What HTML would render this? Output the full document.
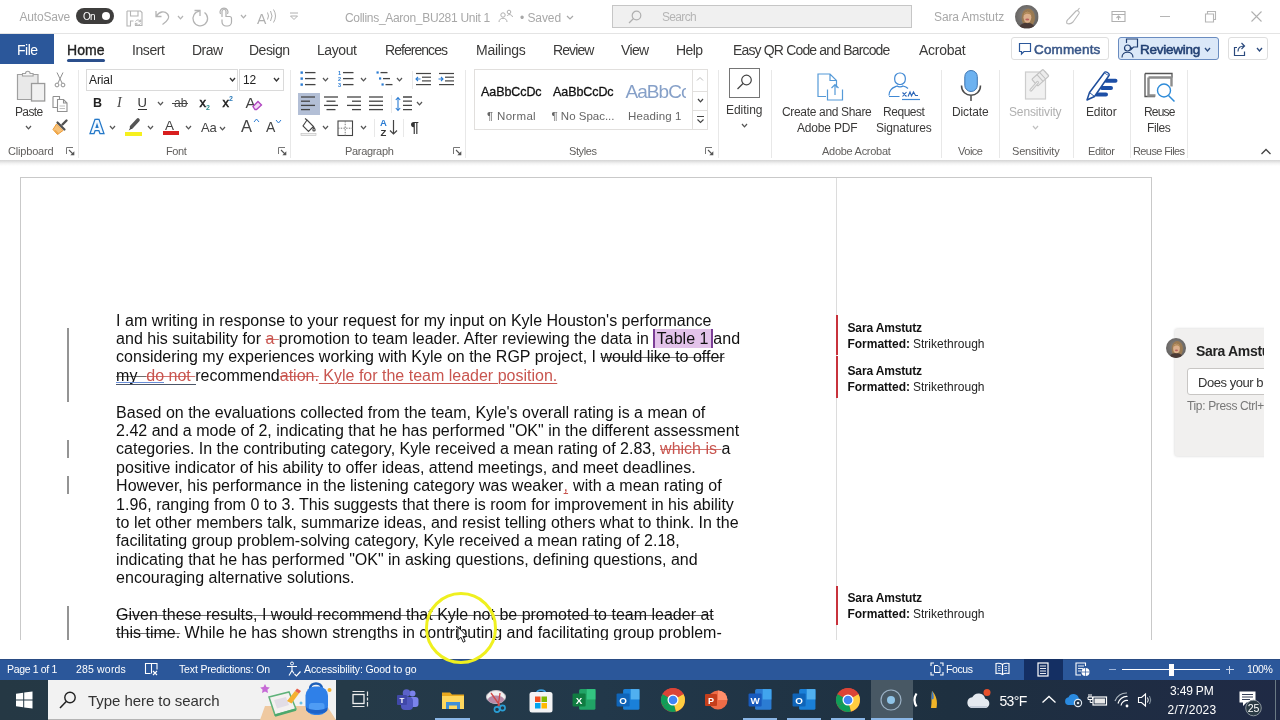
<!DOCTYPE html>
<html><head><meta charset="utf-8"><title>Word</title>
<style>
html,body{margin:0;padding:0}
body{width:1280px;height:720px;overflow:hidden;background:#fff;position:relative;font-family:"Liberation Sans",sans-serif;-webkit-font-smoothing:antialiased}
#root{position:absolute;left:0;top:0;width:1280px;height:720px;will-change:transform;}
.t{position:absolute;white-space:pre;line-height:1}
.r{position:absolute}
svg{overflow:visible}

#doc{position:absolute;left:0;top:0;width:1280px;height:640px;overflow:hidden}
.ln{position:absolute;left:116.100px;font-size:16px;line-height:18px;height:18px;color:#111;white-space:pre}
.sk{text-decoration:line-through;text-decoration-thickness:1px;text-decoration-color:rgba(20,20,20,.62)}
.rs{color:#c8554f;text-decoration:line-through;text-decoration-thickness:1px;text-decoration-color:rgba(200,80,74,.8)}
.ru{color:#c8554f;text-decoration:underline;text-decoration-thickness:1px;text-underline-offset:2px}
.hl{background:#e3c3ea;padding:1px .5px 1px 3.500px;box-shadow:inset 2px 0 0 #7b3f96,inset -2px 0 0 #7b3f96;}
.bu{border-bottom:3px double #4a78c8}
.du{border-bottom:1px solid #555}
</style></head>
<body>
<div id="root">
<div id="doc">
<div class="r" style="left:20px;top:177px;width:1132px;height:1px;background:#c9c9c9;"></div>
<div class="r" style="left:20px;top:177px;width:1px;height:470px;background:#c9c9c9;"></div>
<div class="r" style="left:1151px;top:177px;width:1px;height:470px;background:#c9c9c9;"></div>
<div class="r" style="left:836px;top:178px;width:1px;height:470px;background:#dcdcdc;"></div>
<div class="r" style="left:67.3px;top:328px;width:1.8px;height:74px;background:#949494;"></div>
<div class="r" style="left:67.3px;top:439.5px;width:1.8px;height:18.0px;background:#949494;"></div>
<div class="r" style="left:67.3px;top:476px;width:1.8px;height:18px;background:#949494;"></div>
<div class="r" style="left:67.3px;top:606px;width:1.8px;height:39px;background:#949494;"></div>
<div class="r" style="left:836px;top:315px;width:2px;height:40.30000000000001px;background:#c8323c;"></div>
<div class="r" style="left:836px;top:356.2px;width:2px;height:41.80000000000001px;background:#c8323c;"></div>
<div class="r" style="left:836px;top:585.5px;width:2px;height:39.5px;background:#c8323c;"></div>
<div class="ln" style="top:312.00px">I am writing in response to your request for my input on Kyle Houston's performance</div>
<div class="ln" style="top:330.00px">and his suitability for <span class="rs">a </span>promotion to team leader. After reviewing the data in <span class="hl">Table 1 </span>and</div>
<div class="ln" style="top:348.00px">considering my experiences working with Kyle on the RGP project, I <span class="sk">would like to offer</span></div>
<div class="ln" style="top:367.00px"><span class="sk">my &nbsp;</span><span class="rs">do not </span>recommend<span class="rs">ation.</span><span class="ru"> Kyle for the team leader position.</span></div>
<div class="ln" style="top:404.00px">Based on the evaluations collected from the team, Kyle's overall rating is a mean of</div>
<div class="ln" style="top:422.00px">2.42 and a mode of 2, indicating that he has performed "OK" in the different assessment</div>
<div class="ln" style="top:440.00px">categories. In the contributing category, Kyle received a mean rating of 2.83, <span class="rs">which is </span>a</div>
<div class="ln" style="top:459.00px">positive indicator of his ability to offer ideas, attend meetings, and meet deadlines.</div>
<div class="ln" style="top:477.00px"><span>However, his performance in the listening category was weaker</span><span class="ru" style="margin:0 .6px 0 .2px">,</span> with a mean rating of</div>
<div class="ln" style="top:496.00px">1.96, ranging from 0 to 3. This suggests that there is room for improvement in his ability</div>
<div class="ln" style="top:514.00px">to let other members talk, summarize ideas, and resist telling others what to think. In the</div>
<div class="ln" style="top:532.00px">facilitating group problem-solving category, Kyle received a mean rating of 2.18,</div>
<div class="ln" style="top:551.00px">indicating that he has performed "OK" in asking questions, defining questions, and</div>
<div class="ln" style="top:569.00px">encouraging alternative solutions.</div>
<div class="ln" style="top:606.00px"><span class="sk">Given these results, I would recommend that Kyle not be promoted to team leader at</span></div>
<div class="ln" style="top:624.00px"><span class="sk">this time.</span> While he has shown strengths in contributing and facilitating group problem-</div>
<div class="r" style="left:116px;top:382.4px;width:48px;height:1px;background:#6a8fd8;"></div>
<div class="r" style="left:116px;top:383.8px;width:79.5px;height:1.2px;background:#4b5566;"></div>
<div class="t" style="left:847.5px;top:322px;font-size:12px;color:#111;letter-spacing:-0.15px;font-weight:bold;">Sara Amstutz</div>
<div class="t" style="left:847.5px;top:338px;font-size:12px;color:#111;letter-spacing:-0.02px;font-weight:bold;">Formatted:</div>
<div class="t" style="left:913.0px;top:338px;font-size:12px;color:#222;letter-spacing:0.01px;">Strikethrough</div>
<div class="t" style="left:847.5px;top:365px;font-size:12px;color:#111;letter-spacing:-0.15px;font-weight:bold;">Sara Amstutz</div>
<div class="t" style="left:847.5px;top:381px;font-size:12px;color:#111;letter-spacing:-0.02px;font-weight:bold;">Formatted:</div>
<div class="t" style="left:913.0px;top:381px;font-size:12px;color:#222;letter-spacing:0.01px;">Strikethrough</div>
<div class="t" style="left:847.5px;top:592px;font-size:12px;color:#111;letter-spacing:-0.15px;font-weight:bold;">Sara Amstutz</div>
<div class="t" style="left:847.5px;top:608px;font-size:12px;color:#111;letter-spacing:-0.02px;font-weight:bold;">Formatted:</div>
<div class="t" style="left:913.0px;top:608px;font-size:12px;color:#222;letter-spacing:0.01px;">Strikethrough</div>
<div class="r" style="left:1160px;top:320px;width:103.500px;height:150px;overflow:hidden"><div class="r" style="left:14.5px;top:9px;width:110px;height:126.5px;background:#f1f0ef;box-shadow:0 0 3px rgba(0,0,0,.2);border-radius:2px;"></div>
<div class="r" style="left:27px;top:48px;width:100px;height:27px;background:#fff;border:1px solid #c8c6c4;border-radius:3px;box-sizing:border-box;"></div>
<svg class="r" style="left:6px;top:17.8px" width="20" height="20" viewBox="0 0 24 24"><defs><clipPath id="avc1"><circle cx="12" cy="12" r="12"/></clipPath><radialGradient id="avg1" cx="50%" cy="45%" r="60%"><stop offset="0" stop-color="#8e8b88"/><stop offset="1" stop-color="#5f5d5c"/></radialGradient></defs><g clip-path="url(#avc1)"><rect width="24" height="24" fill="url(#avg1)"/><ellipse cx="13.500" cy="13" rx="6.800" ry="9.500" fill="#9a7a52"/><ellipse cx="12.600" cy="12.500" rx="4" ry="5.600" fill="#dcb08c"/><path d="M8.600 11c.5-5 8-5.500 8.500 0c-2-2.500-6-3-8.500 0z" fill="#b08a58"/><ellipse cx="12.500" cy="14.800" rx="2" ry="1" fill="#b8605c"/><path d="M4 24c1-5 5-6 8.500-5.500c4-.5 7 1.500 8 5.500z" fill="#4a3a36"/></g></svg>
<div class="t" style="left:36.0px;top:24px;font-size:14px;color:#222;letter-spacing:-0.33px;font-weight:bold;">Sara Amstutz</div>
<div class="t" style="left:38.0px;top:56px;font-size:13px;color:#333;letter-spacing:-0.46px;">Does your b</div>
<div class="t" style="left:27.0px;top:80px;font-size:12px;color:#777;letter-spacing:-0.35px;">Tip: Press Ctrl+</div>
</div>
</div>
<div class="r" style="left:0px;top:0px;width:1280px;height:33px;background:#ffffff;"></div>
<div class="t" style="left:19.5px;top:11px;font-size:12px;color:#a8a8a8;letter-spacing:-0.19px;">AutoSave</div>
<div class="r" style="left:76px;top:8.2px;width:38px;height:15.6px;background:#3e3d3c;border-radius:8px;"></div>
<div class="t" style="left:83.0px;top:12px;font-size:10px;color:#fff;letter-spacing:-0.67px;">On</div>
<div class="r" style="left:101.6px;top:11.6px;width:8.8px;height:8.8px;background:#fff;border-radius:50%;"></div>
<svg class="r" style="left:125.5px;top:9.5px" width="17" height="17" viewBox="0 0 17 17"><path d="M1 1h13.500l1.500 1.500v13h-7 M1 1v15h4" fill="none" stroke="#b4b4b4" stroke-width="1.100"/><path d="M4.500 1v5h7.500v-5 M4.500 16v-5h3" fill="none" stroke="#b4b4b4" stroke-width="1.100"/><path d="M9.500 11.500c1-2 4-2 5 0 M14.500 13.500c-1 2-4 2-5 0 M14.700 9.500v2.200h-2.200 M9.300 15.500v-2.200h2.200" fill="none" stroke="#b4b4b4" stroke-width="1"/></svg>
<svg class="r" style="left:153px;top:7px" width="20" height="20" viewBox="0 0 20 20"><path d="M3 4v5.500h5.500 M3.500 9c2.500-4.500 8-5.500 11-2c2.500 3 .5 7-5 10.500" fill="none" stroke="#b4b4b4" stroke-width="1.300"/></svg>
<svg class="r" style="left:176.5px;top:14.5px" width="7" height="6" viewBox="0 0 7 6"><path d="M1 1 L3.5 3.9 L6 1" fill="none" stroke="#b4b4b4" stroke-width="1.25"/></svg>
<svg class="r" style="left:191px;top:7px" width="20" height="20" viewBox="0 0 20 20"><path d="M3.500 3.500h5.500v5.500" fill="none" stroke="#b4b4b4" stroke-width="1.300"/><path d="M8.500 4.200a7.300 7.300 0 1 0 5 1.300" fill="none" stroke="#b4b4b4" stroke-width="1.300"/></svg>
<svg class="r" style="left:217px;top:7px" width="18" height="20" viewBox="0 0 18 20"><path d="M5 10V4.500a2 2 0 0 1 4 0V10 M9 9.500h3.500a2 2 0 0 1 2 2V15a4 4 0 0 1-4 4H9a4 4 0 0 1-4-4v-2.500 M3.500 7a4 4 0 1 1 7 0" fill="none" stroke="#b0b0b0" stroke-width="1.2"/></svg>
<svg class="r" style="left:239.5px;top:14px" width="7" height="6" viewBox="0 0 7 6"><path d="M1 1 L3.5 3.9 L6 1" fill="none" stroke="#b0b0b0" stroke-width="1.25"/></svg>
<div class="t" style="left:257.0px;top:12px;font-size:14px;color:#b0b0b0;letter-spacing:-0.34px;">A</div>
<svg class="r" style="left:266px;top:9px" width="12" height="14" viewBox="0 0 12 14"><path d="M1.500 3.500q2 3.500 0 7 M4.500 2q3 5 0 10 M7.500 .5q4 6.500 0 13" fill="none" stroke="#b0b0b0" stroke-width="1"/></svg>
<svg class="r" style="left:289px;top:12px" width="10" height="9" viewBox="0 0 10 9"><path d="M1 1h8 M1.500 4l3.500 3.500l3.500-3.500z" fill="none" stroke="#b0b0b0" stroke-width="1"/></svg>
<div class="t" style="left:345.0px;top:12px;font-size:12px;color:#a8a8a8;letter-spacing:-0.30px;">Collins_Aaron_BU281 Unit 1</div>
<svg class="r" style="left:498px;top:9px" width="16" height="14" viewBox="0 0 16 14"><circle cx="5" cy="6" r="2.200" fill="none" stroke="#b0b0b0" stroke-width="1"/><path d="M1 13c0-5 8-5 8 0" fill="none" stroke="#b0b0b0" stroke-width="1"/><circle cx="11" cy="3" r="1.800" fill="none" stroke="#b0b0b0" stroke-width="1"/><path d="M9 7c1-2 5-2 5.500 1" fill="none" stroke="#b0b0b0" stroke-width="1"/></svg>
<div class="t" style="left:520.0px;top:12px;font-size:12px;color:#a8a8a8;letter-spacing:-0.08px;">• Saved</div>
<svg class="r" style="left:566.0px;top:14.5px" width="8" height="6" viewBox="0 0 8 6"><path d="M1 1 L4.0 3.9 L7 1" fill="none" stroke="#a8a8a8" stroke-width="1.25"/></svg>
<div class="r" style="left:612px;top:5px;width:300px;height:23px;background:#f0f0f0;border:1px solid #c6c6c6;box-sizing:border-box;"></div>
<svg class="r" style="left:627px;top:9px" width="16" height="16" viewBox="0 0 16 16"><circle cx="9.500" cy="6.500" r="4.300" fill="none" stroke="#b0b0b0" stroke-width="1.200"/><path d="M6.500 9.500L2 14" stroke="#b0b0b0" stroke-width="1.300"/></svg>
<div class="t" style="left:662.0px;top:11px;font-size:12px;color:#b5b5b5;letter-spacing:-0.67px;">Search</div>
<div class="t" style="left:934.0px;top:11px;font-size:12px;color:#a8a8a8;letter-spacing:-0.11px;">Sara Amstutz</div>
<svg class="r" style="left:1015.2px;top:4.5px" width="23.6" height="23.6" viewBox="0 0 24 24"><defs><clipPath id="avc2"><circle cx="12" cy="12" r="12"/></clipPath><radialGradient id="avg2" cx="50%" cy="45%" r="60%"><stop offset="0" stop-color="#8e8b88"/><stop offset="1" stop-color="#5f5d5c"/></radialGradient></defs><g clip-path="url(#avc2)"><rect width="24" height="24" fill="url(#avg2)"/><ellipse cx="13.500" cy="13" rx="6.800" ry="9.500" fill="#9a7a52"/><ellipse cx="12.600" cy="12.500" rx="4" ry="5.600" fill="#dcb08c"/><path d="M8.600 11c.5-5 8-5.500 8.500 0c-2-2.500-6-3-8.500 0z" fill="#b08a58"/><ellipse cx="12.500" cy="14.800" rx="2" ry="1" fill="#b8605c"/><path d="M4 24c1-5 5-6 8.500-5.500c4-.5 7 1.500 8 5.500z" fill="#4a3a36"/></g></svg>
<svg class="r" style="left:1064px;top:7px" width="20" height="20" viewBox="0 0 20 20"><path d="M3 16.500c-1-2 0-3.500 2-5l7-7.500c1.500-1 4 .5 3 2.500l-6 8.500c-1.500 1.500-3.500 2.500-6 1.500z M13.500 3.500l2-2.500" fill="none" stroke="#b8b8b8" stroke-width="1.100"/></svg>
<svg class="r" style="left:1111px;top:10px" width="15" height="13" viewBox="0 0 15 13"><path d="M1 1.500h13v10h-13z M1 4.500h13 M7.500 10V6.500 M5.500 8l2-2l2 2" fill="none" stroke="#b0b0b0" stroke-width="1.100"/></svg>
<div class="r" style="left:1160px;top:15.5px;width:10px;height:1.2px;background:#b5b5b5;"></div>
<svg class="r" style="left:1204px;top:10px" width="13" height="13" viewBox="0 0 13 13"><path d="M1.500 4h8v8h-8z M3.500 4V1.500h8v8H9.500" fill="none" stroke="#b5b5b5" stroke-width="1.100"/></svg>
<svg class="r" style="left:1250px;top:10px" width="13" height="13" viewBox="0 0 13 13"><path d="M1.500 1.500l10 10 M11.500 1.500l-10 10" stroke="#b0b0b0" stroke-width="1.100"/></svg>
<div class="r" style="left:0px;top:33px;width:1280px;height:33px;background:#ffffff;"></div>
<div class="r" style="left:0px;top:33px;width:1280px;height:1px;background:#e4e4e4;"></div>
<div class="r" style="left:0px;top:34px;width:54px;height:30px;background:#2b579a;"></div>
<div class="t" style="left:17.0px;top:43px;font-size:14px;color:#fff;letter-spacing:-0.51px;">File</div>
<div class="t" style="left:67.0px;top:43px;font-size:14px;color:#222;letter-spacing:0.04px;-webkit-text-stroke:.35px #222;">Home</div>
<div class="r" style="left:67.2px;top:58.8px;width:38.2px;height:2.8px;background:#2b4f8c;border-radius:1.500px;"></div>
<div class="t" style="left:132.0px;top:43px;font-size:14px;color:#3b3a39;letter-spacing:-0.42px;">Insert</div>
<div class="t" style="left:192.0px;top:43px;font-size:14px;color:#3b3a39;letter-spacing:-0.54px;">Draw</div>
<div class="t" style="left:249.0px;top:43px;font-size:14px;color:#3b3a39;letter-spacing:-0.51px;">Design</div>
<div class="t" style="left:317.0px;top:43px;font-size:14px;color:#3b3a39;letter-spacing:-0.42px;">Layout</div>
<div class="t" style="left:385.0px;top:43px;font-size:14px;color:#3b3a39;letter-spacing:-0.96px;">References</div>
<div class="t" style="left:476.0px;top:43px;font-size:14px;color:#3b3a39;letter-spacing:-0.23px;">Mailings</div>
<div class="t" style="left:553.0px;top:43px;font-size:14px;color:#3b3a39;letter-spacing:-0.90px;">Review</div>
<div class="t" style="left:621.0px;top:43px;font-size:14px;color:#3b3a39;letter-spacing:-0.65px;">View</div>
<div class="t" style="left:676.0px;top:43px;font-size:14px;color:#3b3a39;letter-spacing:-0.57px;">Help</div>
<div class="t" style="left:733.0px;top:43px;font-size:14px;color:#3b3a39;letter-spacing:-0.84px;">Easy QR Code and Barcode</div>
<div class="t" style="left:919.0px;top:43px;font-size:14px;color:#3b3a39;letter-spacing:-0.25px;">Acrobat</div>
<div class="r" style="left:1011px;top:36.5px;width:98px;height:23.5px;background:#fff;border:1px solid #dedede;border-radius:3px;box-sizing:border-box;"></div>
<svg class="r" style="left:1018px;top:42px" width="14" height="14" viewBox="0 0 14 14"><path d="M1.500 1.500h11v8h-6.500l-2.500 2.500v-2.500h-2z" fill="none" stroke="#2b579a" stroke-width="1.200"/></svg>
<div class="t" style="left:1034.0px;top:43px;font-size:13.5px;color:#3a5788;letter-spacing:0.15px;-webkit-text-stroke:.55px #3a5788;">Comments</div>
<div class="r" style="left:1118px;top:36.5px;width:100.5px;height:23.5px;background:#dbe8f8;border:1px solid #6a8cc0;border-radius:3px;box-sizing:border-box;"></div>
<svg class="r" style="left:1121px;top:38px" width="18" height="20" viewBox="0 0 18 20"><path d="M5.500 5V1h11v8h-4l-2.500 2.500V9" fill="none" stroke="#213f72" stroke-width="1.200"/><circle cx="6.500" cy="10" r="3" fill="#dbe8f8" stroke="#213f72" stroke-width="1.200"/><path d="M1 19.500c0-7 11-7 11 0" fill="none" stroke="#213f72" stroke-width="1.200"/></svg>
<div class="t" style="left:1140.0px;top:43px;font-size:13.5px;color:#213f72;letter-spacing:-0.25px;-webkit-text-stroke:.55px #213f72;">Reviewing</div>
<svg class="r" style="left:1204.0px;top:46.5px" width="7" height="6" viewBox="0 0 7 6"><path d="M1 1 L3.5 3.9 L6 1" fill="none" stroke="#2b4a7d" stroke-width="1.3499999999999999"/></svg>
<div class="r" style="left:1227.5px;top:36.5px;width:40px;height:23.5px;background:#fff;border:1px solid #dedede;border-radius:3px;box-sizing:border-box;"></div>
<svg class="r" style="left:1233px;top:41px" width="15" height="16" viewBox="0 0 15 16"><path d="M4 6.500h-2.500v8h10v-4 M5 10.500c0-4 3-5.500 6-5.500 M8.500 2l3 3l-3 3" fill="none" stroke="#2b4a7d" stroke-width="1.200"/></svg>
<svg class="r" style="left:1256.0px;top:47px" width="7" height="6" viewBox="0 0 7 6"><path d="M1 1 L3.5 3.9 L6 1" fill="none" stroke="#2b4a7d" stroke-width="1.3499999999999999"/></svg>
<div class="r" style="left:0px;top:66px;width:1280px;height:94px;background:#ffffff;"></div>
<div class="r" style="left:0px;top:159.5px;width:1280px;height:6px;background:linear-gradient(#d4d4d4,#f4f4f4 60%,#ffffff);"></div>
<svg class="r" style="left:16px;top:70px" width="32" height="34" viewBox="0 0 32 34"><path d="M1.500 4.500h20.500v25h-20.500z" fill="#e9e9e9" stroke="#a0a0a0" stroke-width="1.200"/><path d="M6.500 6V3.500h3a2.300 2.300 0 0 1 4.600 0h3v2.500z" fill="#f6f6f6" stroke="#a0a0a0" stroke-width="1.100"/><rect x="15.500" y="13.500" width="13.200" height="17.500" fill="#f1f1f1" stroke="#9a9a9a" stroke-width="1.300"/></svg>
<div class="t" style="left:15.0px;top:106px;font-size:12px;color:#3b3a39;letter-spacing:-0.64px;">Paste</div>
<svg class="r" style="left:25.0px;top:125px" width="7" height="6" viewBox="0 0 7 6"><path d="M1 1 L3.5 3.9 L6 1" fill="none" stroke="#555" stroke-width="1.25"/></svg>
<svg class="r" style="left:54px;top:71.5px" width="12" height="16" viewBox="0 0 12 16"><path d="M3 .5l5 10.500 M9 .5l-5 10.500" stroke="#909090" stroke-width="1" fill="none"/><circle cx="3" cy="13" r="1.900" fill="none" stroke="#909090" stroke-width="1"/><circle cx="9" cy="13" r="1.900" fill="none" stroke="#909090" stroke-width="1"/></svg>
<svg class="r" style="left:52px;top:94.5px" width="17" height="17" viewBox="0 0 17 17"><path d="M1 1.500h6.500v3 M1 1.500v11h4" fill="none" stroke="#909090" stroke-width="1.100"/><path d="M5.500 4.500h6l3.500 3.500v8.500h-9.500z M11.500 4.500v3.500h3.500" fill="none" stroke="#909090" stroke-width="1.100"/><path d="M7.500 11h5.500 M7.500 13.500h5.500" stroke="#b0b0b0" stroke-width=".800"/></svg>
<svg class="r" style="left:52px;top:118px" width="17" height="17" viewBox="0 0 17 17"><path d="M4.500 6l6.500 6.500l-5.500 4l-4.500-5z" fill="#f7c27a" stroke="#ec9a34" stroke-width="1"/><path d="M3 12.500l3.500 3.500" stroke="#f0a848" stroke-width="1.600"/><path d="M5.500 4.500l7 7" stroke="#505050" stroke-width="2.200" stroke-linecap="round"/><path d="M10.500 6.500l4-4" stroke="#505050" stroke-width="2.400" stroke-linecap="round"/></svg>
<div class="t" style="left:8.0px;top:146px;font-size:11px;color:#605e5c;letter-spacing:-0.18px;">Clipboard</div>
<svg class="r" style="left:65.5px;top:147.0px" width="9" height="9" viewBox="0 0 9 9"><path d="M.5 7V.5H7" fill="none" stroke="#777" stroke-width="1"/><path d="M3 3l4.500 4.500" stroke="#555" stroke-width="1.100"/><path d="M8.300 4.300V8.300H4.300z" fill="#555"/></svg>
<div class="r" style="left:78px;top:70px;width:1px;height:88px;background:#e8e8e8;"></div>
<div class="r" style="left:86px;top:69px;width:152px;height:22px;background:#fff;border:1px solid #dadada;box-sizing:border-box;"></div>
<div class="r" style="left:239px;top:69px;width:45px;height:22px;background:#fff;border:1px solid #dadada;box-sizing:border-box;"></div>
<div class="t" style="left:89.0px;top:74px;font-size:12px;color:#222;letter-spacing:-0.10px;">Arial</div>
<svg class="r" style="left:228.5px;top:77px" width="7" height="6" viewBox="0 0 7 6"><path d="M1 1 L3.5 3.9 L6 1" fill="none" stroke="#333" stroke-width="1.3499999999999999"/></svg>
<div class="t" style="left:243.0px;top:74px;font-size:12px;color:#222;letter-spacing:-0.17px;">12</div>
<svg class="r" style="left:272.5px;top:77px" width="7" height="6" viewBox="0 0 7 6"><path d="M1 1 L3.5 3.9 L6 1" fill="none" stroke="#333" stroke-width="1.3499999999999999"/></svg>
<div class="t" style="left:93.0px;top:97px;font-size:12.5px;color:#222;font-weight:bold;">B</div>
<div class="t" style="left:117.0px;top:96px;font-size:14px;color:#444;font-style:italic;font-family:'Liberation Serif',serif;">I</div>
<div class="t" style="left:137.5px;top:96px;font-size:13px;color:#333;">U</div>
<div class="r" style="left:137.5px;top:109px;width:9.5px;height:1.1px;background:#333;"></div>
<svg class="r" style="left:156.5px;top:100.5px" width="7" height="6" viewBox="0 0 7 6"><path d="M1 1 L3.5 3.9 L6 1" fill="none" stroke="#555" stroke-width="1.25"/></svg>
<div class="t" style="left:174.0px;top:97px;font-size:12px;color:#444;">ab</div>
<div class="r" style="left:172px;top:102.5px;width:16px;height:1.1px;background:#444;"></div>
<div class="t" style="left:199.5px;top:96px;font-size:13px;color:#222;-webkit-text-stroke:.5px #222;">x</div>
<div class="t" style="left:206.0px;top:104px;font-size:7px;color:#2a8a8a;font-weight:bold;">2</div>
<div class="t" style="left:222.5px;top:96px;font-size:13px;color:#222;-webkit-text-stroke:.5px #222;">x</div>
<div class="t" style="left:229.0px;top:95px;font-size:7px;color:#2a7ab8;font-weight:bold;">2</div>
<div class="t" style="left:245.5px;top:95px;font-size:15px;color:#444;">A</div>
<svg class="r" style="left:251.5px;top:100px" width="11" height="10" viewBox="0 0 11 10"><path d="M1 6.500l5-5l3.500 3.500l-5 4.500h-1.500z" fill="#f3d8f5" stroke="#b044c0" stroke-width="1.300"/></svg>
<div class="t" style="left:90.5px;top:118px;font-size:18px;color:#f4f9fe;font-weight:bold;-webkit-text-stroke:2.600px #2478c8;paint-order:stroke fill;">A</div>
<svg class="r" style="left:108.5px;top:125px" width="7" height="6" viewBox="0 0 7 6"><path d="M1 1 L3.5 3.9 L6 1" fill="none" stroke="#555" stroke-width="1.25"/></svg>
<svg class="r" style="left:126px;top:117px" width="16" height="16" viewBox="0 0 16 16"><path d="M12 3l-6.500 7" stroke="#555" stroke-width="3.600" stroke-linecap="round"/><path d="M4.500 10l1.800 1.600l-3.600 1.800z" fill="#444"/></svg>
<div class="r" style="left:125px;top:131.5px;width:17px;height:4px;background:#f6f01e;"></div>
<svg class="r" style="left:146.5px;top:125px" width="7" height="6" viewBox="0 0 7 6"><path d="M1 1 L3.5 3.9 L6 1" fill="none" stroke="#555" stroke-width="1.25"/></svg>
<div class="t" style="left:165.0px;top:119px;font-size:13.5px;color:#444;">A</div>
<div class="r" style="left:162.5px;top:130.5px;width:16.5px;height:4px;background:#d81e1e;"></div>
<svg class="r" style="left:184.5px;top:125px" width="7" height="6" viewBox="0 0 7 6"><path d="M1 1 L3.5 3.9 L6 1" fill="none" stroke="#555" stroke-width="1.25"/></svg>
<div class="t" style="left:201.0px;top:121px;font-size:13px;color:#444;letter-spacing:-0.20px;">Aa</div>
<svg class="r" style="left:219.0px;top:125.5px" width="7" height="6" viewBox="0 0 7 6"><path d="M1 1 L3.5 3.9 L6 1" fill="none" stroke="#555" stroke-width="1.25"/></svg>
<div class="t" style="left:241.0px;top:118px;font-size:16.5px;color:#444;">A</div>
<svg class="r" style="left:252.5px;top:118px" width="7" height="5" viewBox="0 0 7 5"><path d="M1 4l2.500-3l2.500 3" fill="none" stroke="#2b7cd3" stroke-width="1"/></svg>
<div class="t" style="left:266.0px;top:120px;font-size:14px;color:#444;">A</div>
<svg class="r" style="left:274.5px;top:118.5px" width="7" height="5" viewBox="0 0 7 5"><path d="M1 1l2.500 3l2.500-3" fill="none" stroke="#2b7cd3" stroke-width="1"/></svg>
<div class="t" style="left:166.0px;top:146px;font-size:11px;color:#605e5c;letter-spacing:-0.38px;">Font</div>
<svg class="r" style="left:277.5px;top:147.0px" width="9" height="9" viewBox="0 0 9 9"><path d="M.5 7V.5H7" fill="none" stroke="#777" stroke-width="1"/><path d="M3 3l4.500 4.500" stroke="#555" stroke-width="1.100"/><path d="M8.300 4.300V8.300H4.300z" fill="#555"/></svg>
<div class="r" style="left:290px;top:70px;width:1px;height:88px;background:#e8e8e8;"></div>
<svg class="r" style="left:300px;top:71.3px" width="16" height="16" viewBox="0 0 16 16"><rect x="0.500" y="0.4" width="2.400" height="2.400" fill="#2b7cd3"/><path d="M5 1.6H15.500" stroke="#444" stroke-width="1.300"/><rect x="0.500" y="6.4" width="2.400" height="2.400" fill="#2b7cd3"/><path d="M5 7.6H15.500" stroke="#444" stroke-width="1.300"/><rect x="0.500" y="12.4" width="2.400" height="2.400" fill="#2b7cd3"/><path d="M5 13.6H15.500" stroke="#444" stroke-width="1.300"/></svg>
<svg class="r" style="left:322.0px;top:77px" width="7" height="6" viewBox="0 0 7 6"><path d="M1 1 L3.5 3.9 L6 1" fill="none" stroke="#555" stroke-width="1.25"/></svg>
<svg class="r" style="left:338px;top:71.3px" width="16" height="16" viewBox="0 0 16 16"><text x="1.600" y="3.6" font-family="Liberation Sans,sans-serif" font-size="5.500" font-weight="bold" fill="#2b7cd3" text-anchor="middle">1</text><path d="M5 1.6H15.500" stroke="#444" stroke-width="1.300"/><text x="1.600" y="9.6" font-family="Liberation Sans,sans-serif" font-size="5.500" font-weight="bold" fill="#2b7cd3" text-anchor="middle">2</text><path d="M5 7.6H15.500" stroke="#444" stroke-width="1.300"/><text x="1.600" y="15.6" font-family="Liberation Sans,sans-serif" font-size="5.500" font-weight="bold" fill="#2b7cd3" text-anchor="middle">3</text><path d="M5 13.6H15.500" stroke="#444" stroke-width="1.300"/></svg>
<svg class="r" style="left:359.5px;top:77px" width="7" height="6" viewBox="0 0 7 6"><path d="M1 1 L3.5 3.9 L6 1" fill="none" stroke="#555" stroke-width="1.25"/></svg>
<svg class="r" style="left:376px;top:71.3px" width="16" height="16" viewBox="0 0 16 16"><rect x="0.5" y="0.4" width="2.200" height="2.200" fill="#2b7cd3"/><path d="M4.5 1.6H11.5" stroke="#444" stroke-width="1.300"/><rect x="3" y="6.4" width="2.200" height="2.200" fill="#2b7cd3"/><path d="M7 7.6H14" stroke="#444" stroke-width="1.300"/><rect x="5.5" y="12.4" width="2.200" height="2.200" fill="#2b7cd3"/><path d="M9.5 13.6H16.5" stroke="#444" stroke-width="1.300"/></svg>
<svg class="r" style="left:395.5px;top:77px" width="7" height="6" viewBox="0 0 7 6"><path d="M1 1 L3.5 3.9 L6 1" fill="none" stroke="#555" stroke-width="1.25"/></svg>
<div class="r" style="left:412px;top:71px;width:1px;height:18px;background:#e8e8e8;"></div>
<svg class="r" style="left:415px;top:72px" width="17" height="15" viewBox="0 0 17 15"><path d="M1 1.5H16" stroke="#444" stroke-width="1.200"/><path d="M7 5.2H16" stroke="#444" stroke-width="1.200"/><path d="M7 8.9H16" stroke="#444" stroke-width="1.200"/><path d="M1 12.600000000000001H16" stroke="#444" stroke-width="1.200"/><path d="M5.500 7H1 M3 5l-2 2l2 2" fill="none" stroke="#2b7cd3" stroke-width="1.100"/></svg>
<svg class="r" style="left:438px;top:72px" width="17" height="15" viewBox="0 0 17 15"><path d="M1 1.5H16" stroke="#444" stroke-width="1.200"/><path d="M7 5.2H16" stroke="#444" stroke-width="1.200"/><path d="M7 8.9H16" stroke="#444" stroke-width="1.200"/><path d="M1 12.600000000000001H16" stroke="#444" stroke-width="1.200"/><path d="M.5 7H5 M3 5l2 2l-2 2" fill="none" stroke="#2b7cd3" stroke-width="1.100"/></svg>
<div class="r" style="left:298px;top:93px;width:22px;height:21.5px;background:#b3bfd6;"></div>
<svg class="r" style="left:301px;top:95.5px" width="16" height="15" viewBox="0 0 16 15"><path d="M0 1.0H14" stroke="#444" stroke-width="1.300"/><path d="M0 5.2H9" stroke="#444" stroke-width="1.300"/><path d="M0 9.4H14" stroke="#444" stroke-width="1.300"/><path d="M0 13.600000000000001H9" stroke="#444" stroke-width="1.300"/></svg>
<svg class="r" style="left:324px;top:95.5px" width="16" height="15" viewBox="0 0 16 15"><path d="M0 1.0H14" stroke="#444" stroke-width="1.300"/><path d="M2.5 5.2H11.5" stroke="#444" stroke-width="1.300"/><path d="M0 9.4H14" stroke="#444" stroke-width="1.300"/><path d="M2.5 13.600000000000001H11.5" stroke="#444" stroke-width="1.300"/></svg>
<svg class="r" style="left:346.5px;top:95.5px" width="16" height="15" viewBox="0 0 16 15"><path d="M0 1.0H14" stroke="#444" stroke-width="1.300"/><path d="M5 5.2H14" stroke="#444" stroke-width="1.300"/><path d="M0 9.4H14" stroke="#444" stroke-width="1.300"/><path d="M5 13.600000000000001H14" stroke="#444" stroke-width="1.300"/></svg>
<svg class="r" style="left:369px;top:95.5px" width="16" height="15" viewBox="0 0 16 15"><path d="M0 1.0H14" stroke="#444" stroke-width="1.300"/><path d="M0 5.2H14" stroke="#444" stroke-width="1.300"/><path d="M0 9.4H14" stroke="#444" stroke-width="1.300"/><path d="M0 13.600000000000001H14" stroke="#444" stroke-width="1.300"/></svg>
<div class="r" style="left:391px;top:95px;width:1px;height:18px;background:#e8e8e8;"></div>
<svg class="r" style="left:395px;top:95.5px" width="18" height="17" viewBox="0 0 18 17"><path d="M3 1.500v13 M.8 4l2.200-2.500l2.200 2.500 M.8 12l2.200 2.500l2.200-2.500" fill="none" stroke="#2b7cd3" stroke-width="1.100"/><path d="M8 1h9 M8 5.200h9 M8 9.400h9 M8 13.600h9" stroke="#444" stroke-width="1.300"/></svg>
<svg class="r" style="left:416.0px;top:101px" width="7" height="6" viewBox="0 0 7 6"><path d="M1 1 L3.5 3.9 L6 1" fill="none" stroke="#555" stroke-width="1.25"/></svg>
<svg class="r" style="left:300px;top:118px" width="18" height="18" viewBox="0 0 18 18"><path d="M7 2l6.500 6.500l-5 5l-5.500-5.500z M7 2l-2-1.500 M14 9.500c1.500 2 1.500 3.500 0 3.500s-1.500-1.500 0-3.500z" fill="none" stroke="#444" stroke-width="1.100"/><rect x="1" y="15.500" width="15" height="2" fill="#f0f0f0" stroke="#bbb" stroke-width=".600"/></svg>
<svg class="r" style="left:322.0px;top:125px" width="7" height="6" viewBox="0 0 7 6"><path d="M1 1 L3.5 3.9 L6 1" fill="none" stroke="#555" stroke-width="1.25"/></svg>
<svg class="r" style="left:337px;top:119.5px" width="17" height="17" viewBox="0 0 17 17"><rect x="1" y="1" width="14.500" height="14.500" fill="none" stroke="#444" stroke-width="1.100"/><path d="M8.200 1v14.500 M1 8.200h14.500" stroke="#777" stroke-width="1" stroke-dasharray="1.500 1.200"/></svg>
<svg class="r" style="left:359.5px;top:125px" width="7" height="6" viewBox="0 0 7 6"><path d="M1 1 L3.5 3.9 L6 1" fill="none" stroke="#555" stroke-width="1.25"/></svg>
<div class="r" style="left:374px;top:119px;width:1px;height:18px;background:#e8e8e8;"></div>
<div class="t" style="left:380.0px;top:118px;font-size:9.5px;color:#2b7cd3;font-weight:bold;">A</div>
<div class="t" style="left:380.5px;top:128px;font-size:9.5px;color:#333;font-weight:bold;">Z</div>
<svg class="r" style="left:389px;top:119px" width="9" height="17" viewBox="0 0 9 17"><path d="M4.500 1v14 M1 11.500l3.500 3.500l3.500-3.500" fill="none" stroke="#444" stroke-width="1.200"/></svg>
<div class="r" style="left:403px;top:119px;width:1px;height:18px;background:#e8e8e8;"></div>
<div class="t" style="left:410.5px;top:119px;font-size:15px;color:#333;font-weight:bold;">¶</div>
<div class="t" style="left:345.0px;top:146px;font-size:11px;color:#605e5c;letter-spacing:-0.32px;">Paragraph</div>
<svg class="r" style="left:452.5px;top:147.0px" width="9" height="9" viewBox="0 0 9 9"><path d="M.5 7V.5H7" fill="none" stroke="#777" stroke-width="1"/><path d="M3 3l4.500 4.500" stroke="#555" stroke-width="1.100"/><path d="M8.300 4.300V8.300H4.300z" fill="#555"/></svg>
<div class="r" style="left:465px;top:70px;width:1px;height:88px;background:#e8e8e8;"></div>
<div class="r" style="left:474px;top:69px;width:234px;height:60.5px;background:#fff;border:1px solid #e1dfdd;box-sizing:border-box;"></div>
<div class="r" style="left:691.5px;top:69px;width:1px;height:60px;background:#e1dfdd;"></div>
<div class="r" style="left:691.5px;top:91px;width:16px;height:1px;background:#e1dfdd;"></div>
<div class="r" style="left:691.5px;top:110px;width:16px;height:1px;background:#e1dfdd;"></div>
<div class="t" style="left:481.0px;top:86px;font-size:12.5px;color:#111;letter-spacing:-0.08px;-webkit-text-stroke:.3px #111;">AaBbCcDc</div>
<div class="t" style="left:487.0px;top:111px;font-size:11.5px;color:#666;letter-spacing:0.32px;">¶ Normal</div>
<div class="t" style="left:553.0px;top:86px;font-size:12.5px;color:#111;letter-spacing:-0.08px;-webkit-text-stroke:.3px #111;">AaBbCcDc</div>
<div class="t" style="left:551.5px;top:111px;font-size:11.5px;color:#666;letter-spacing:-0.01px;">¶ No Spac...</div>
<div class="r" style="left:624px;top:76px;width:61.500px;height:30px;overflow:hidden"><div class="t" style="left:1.5px;top:6px;font-size:19px;color:#86a0c8;letter-spacing:-0.95px;">AaBbCc</div>
</div>
<div class="t" style="left:628.0px;top:111px;font-size:11.5px;color:#666;letter-spacing:0.12px;">Heading 1</div>
<svg class="r" style="left:696px;top:76px" width="8" height="6" viewBox="0 0 8 6"><path d="M1 4.500l3-3l3 3" fill="none" stroke="#bbb" stroke-width="1"/></svg>
<svg class="r" style="left:696.5px;top:97.5px" width="7" height="6" viewBox="0 0 7 6"><path d="M1 1 L3.5 3.9 L6 1" fill="none" stroke="#444" stroke-width="1.25"/></svg>
<svg class="r" style="left:695.5px;top:115px" width="9" height="9" viewBox="0 0 9 9"><path d="M1 1.500h7" stroke="#444" stroke-width="1"/><path d="M1.500 4.500l3 3l3-3" fill="none" stroke="#444" stroke-width="1.100"/></svg>
<div class="t" style="left:569.0px;top:146px;font-size:11px;color:#605e5c;letter-spacing:-0.41px;">Styles</div>
<svg class="r" style="left:705.0px;top:147.0px" width="9" height="9" viewBox="0 0 9 9"><path d="M.5 7V.5H7" fill="none" stroke="#777" stroke-width="1"/><path d="M3 3l4.500 4.500" stroke="#555" stroke-width="1.100"/><path d="M8.300 4.300V8.300H4.300z" fill="#555"/></svg>
<div class="r" style="left:718px;top:70px;width:1px;height:88px;background:#e8e8e8;"></div>
<div class="r" style="left:729px;top:68px;width:31px;height:29.5px;background:#fff;border:1.500px solid #757575;box-sizing:border-box;"></div>
<svg class="r" style="left:735px;top:73px" width="19" height="19" viewBox="0 0 19 19"><circle cx="11.500" cy="7" r="4.800" fill="none" stroke="#444" stroke-width="1.200"/><path d="M8 10.500L2.500 16" stroke="#444" stroke-width="1.300"/></svg>
<div class="t" style="left:726.0px;top:104px;font-size:12px;color:#3b3a39;letter-spacing:-0.03px;">Editing</div>
<svg class="r" style="left:741.0px;top:122.5px" width="7" height="6" viewBox="0 0 7 6"><path d="M1 1 L3.5 3.9 L6 1" fill="none" stroke="#555" stroke-width="1.25"/></svg>
<div class="r" style="left:771px;top:70px;width:1px;height:88px;background:#e8e8e8;"></div>
<svg class="r" style="left:814px;top:72px" width="30" height="34" viewBox="0 0 30 34"><path d="M12 24.500h-8v-22.500h12l6.500 6.500v7 M16 2v6.500h6.500" fill="none" stroke="#559ad8" stroke-width="1.200"/><path d="M13.500 17.500v10.500h15v-10.500 M21 23v-10.500 M17.500 16l3.500-3.500l3.500 3.500" fill="none" stroke="#559ad8" stroke-width="1.200"/></svg>
<div class="t" style="left:782.0px;top:106px;font-size:12px;color:#3b3a39;letter-spacing:-0.33px;">Create and Share</div>
<div class="t" style="left:797.0px;top:122px;font-size:12px;color:#3b3a39;letter-spacing:-0.17px;">Adobe PDF</div>
<svg class="r" style="left:887px;top:70px" width="34" height="34" viewBox="0 0 34 34"><rect x="7.700" y="3" width="10.600" height="11.500" rx="5" fill="none" stroke="#3f88d4" stroke-width="1.200"/><path d="M2 25.500c0-7.500 5.500-8.500 8-9.500c1.500 1.300 4.500 1.300 6 0c2 .5 3.500 1 5 2.500 M2 26.500h10.500" fill="none" stroke="#3f88d4" stroke-width="1.200"/><path d="M15.500 26.500l4-4.500 M15.500 22.500l4 4 M21 26.500l2-4.500l1.500 4l2-4l2 3.500h2.500" fill="none" stroke="#2c66b8" stroke-width="1.100"/><path d="M15 29.500h18" stroke="#3f88d4" stroke-width="1.200"/></svg>
<div class="t" style="left:883.0px;top:106px;font-size:12px;color:#3b3a39;letter-spacing:-0.46px;">Request</div>
<div class="t" style="left:876.0px;top:122px;font-size:12px;color:#3b3a39;letter-spacing:-0.19px;">Signatures</div>
<div class="t" style="left:822.0px;top:146px;font-size:11px;color:#605e5c;letter-spacing:-0.28px;">Adobe Acrobat</div>
<div class="r" style="left:941px;top:70px;width:1px;height:88px;background:#e8e8e8;"></div>
<svg class="r" style="left:958px;top:69px" width="26" height="36" viewBox="0 0 26 36"><rect x="6.800" y="1.500" width="12.500" height="21" rx="6.200" fill="#6db2f0" stroke="#3d74b0" stroke-width="1"/><path d="M3.500 16.500c0 13 19 13 19 0 M13 26.500v5.500" fill="none" stroke="#4a4a4a" stroke-width="1.500"/></svg>
<div class="t" style="left:952.0px;top:106px;font-size:12px;color:#3b3a39;letter-spacing:-0.12px;">Dictate</div>
<div class="t" style="left:958.0px;top:146px;font-size:11px;color:#605e5c;letter-spacing:-0.48px;">Voice</div>
<div class="r" style="left:999px;top:70px;width:1px;height:88px;background:#e8e8e8;"></div>
<svg class="r" style="left:1021px;top:70px" width="30" height="34" viewBox="0 0 30 34"><rect x="4.500" y="2" width="20" height="27" fill="#f1f1f1" stroke="#cdcdcd" stroke-width="1.200"/><g transform="rotate(-42 19 8)"><rect x="12" y="3.500" width="15" height="9" rx="1" fill="#ececec" stroke="#c2c2c2" stroke-width="1.200"/><path d="M19 3.500v9 M22.500 3.500v9" stroke="#c2c2c2" stroke-width="1.100"/></g><path d="M10 20l6.500-7.500" stroke="#c8c8c8" stroke-width="3.200" stroke-linecap="round"/><path d="M10 20l6.500-7.500" stroke="#f1f1f1" stroke-width="1" stroke-linecap="round"/></svg>
<div class="t" style="left:1009.0px;top:106px;font-size:12px;color:#b0b0b0;letter-spacing:-0.14px;">Sensitivity</div>
<svg class="r" style="left:1032.0px;top:124.5px" width="7" height="6" viewBox="0 0 7 6"><path d="M1 1 L3.5 3.9 L6 1" fill="none" stroke="#c0c0c0" stroke-width="1.25"/></svg>
<div class="t" style="left:1012.0px;top:146px;font-size:11px;color:#605e5c;letter-spacing:-0.18px;">Sensitivity</div>
<div class="r" style="left:1073px;top:70px;width:1px;height:88px;background:#e8e8e8;"></div>
<svg class="r" style="left:1085px;top:70px" width="32" height="34" viewBox="0 0 32 34"><path d="M21 10.800h9.500 M17 17.900h9 M11.500 24.400h9.500" stroke="#1d4fa6" stroke-width="4" stroke-linecap="round"/><path d="M2 30l2.500-7.500L19.500 2.500l4.500 3L9.500 26.500z" fill="#fff" stroke="#1f4e9c" stroke-width="1.500" stroke-linejoin="round"/><path d="M4.500 22.500l5 4" stroke="#1f4e9c" stroke-width="1"/><path d="M19.500 2.500c1-1.800 5.500.8 4.500 3" fill="#fff" stroke="#1f4e9c" stroke-width="1.400"/></svg>
<div class="t" style="left:1086.0px;top:106px;font-size:12px;color:#3b3a39;letter-spacing:-0.14px;">Editor</div>
<div class="t" style="left:1088.0px;top:146px;font-size:11px;color:#605e5c;letter-spacing:-0.37px;">Editor</div>
<div class="r" style="left:1130px;top:70px;width:1px;height:88px;background:#e8e8e8;"></div>
<svg class="r" style="left:1142px;top:72px" width="34" height="32" viewBox="0 0 34 32"><path d="M3 1.500h27v4 M3 1.500v23h10" fill="none" stroke="#555" stroke-width="1.300"/><path d="M6.500 5.500h23v9 M6.500 5.500v18h7" fill="none" stroke="#8c8c8c" stroke-width="2.400"/><circle cx="22" cy="18.500" r="6.500" fill="#fff" stroke="#2e8bd8" stroke-width="1.400"/><path d="M26.500 23.500l6 6" stroke="#2e8bd8" stroke-width="1.500"/></svg>
<div class="t" style="left:1144.0px;top:106px;font-size:12px;color:#3b3a39;letter-spacing:-0.84px;">Reuse</div>
<div class="t" style="left:1147.0px;top:122px;font-size:12px;color:#3b3a39;letter-spacing:-0.37px;">Files</div>
<div class="t" style="left:1133.0px;top:146px;font-size:11px;color:#605e5c;letter-spacing:-0.60px;">Reuse Files</div>
<div class="r" style="left:1187px;top:70px;width:1px;height:88px;background:#e8e8e8;"></div>
<svg class="r" style="left:1260px;top:147px" width="12" height="9" viewBox="0 0 12 9"><path d="M1.500 7l4.500-4.500l4.500 4.500" fill="none" stroke="#444" stroke-width="1.300"/></svg>
<div class="r" style="left:0px;top:658.5px;width:1280px;height:21.5px;background:#2b579a;"></div>
<div class="r" style="left:0px;top:658.5px;width:1280px;height:1px;background:#2a4c84;"></div>
<div class="t" style="left:7.0px;top:664px;font-size:10.5px;color:#fff;letter-spacing:-0.34px;">Page 1 of 1</div>
<div class="t" style="left:76.0px;top:664px;font-size:10.5px;color:#fff;letter-spacing:0.17px;">285 words</div>
<svg class="r" style="left:144px;top:662px" width="15" height="14" viewBox="0 0 15 14"><path d="M7.500 1.500h-6v10h5 M7.500 1.500h5.500v6 M7.500 1.500v10" fill="none" stroke="#fff" stroke-width="1.100"/><path d="M9 9l4 4 M13 9l-4 4" stroke="#fff" stroke-width="1.100"/></svg>
<div class="t" style="left:179.0px;top:664px;font-size:10.5px;color:#fff;letter-spacing:-0.15px;">Text Predictions: On</div>
<svg class="r" style="left:286px;top:661px" width="16" height="17" viewBox="0 0 16 17"><circle cx="6" cy="2.500" r="1.500" fill="none" stroke="#fff" stroke-width="1"/><path d="M1 5.500h10 M6 5.500v4 M6 9.500l-3 5 M6 9.500l2 3" fill="none" stroke="#fff" stroke-width="1.100"/><path d="M8.500 13l2 2l4-4.500" fill="none" stroke="#fff" stroke-width="1.200"/></svg>
<div class="t" style="left:304.0px;top:664px;font-size:10.5px;color:#fff;letter-spacing:-0.10px;">Accessibility: Good to go</div>
<svg class="r" style="left:930px;top:662px" width="14" height="14" viewBox="0 0 14 14"><path d="M1 4V1h3 M10 1h3v3 M13 10v3h-3 M4 13H1v-3" fill="none" stroke="#fff" stroke-width="1.100"/><path d="M4.500 3.500h3.500l2 2v5h-5.500z" fill="none" stroke="#fff" stroke-width="1"/></svg>
<div class="t" style="left:946.0px;top:664px;font-size:10.5px;color:#fff;letter-spacing:-0.42px;">Focus</div>
<svg class="r" style="left:995px;top:662px" width="15" height="14" viewBox="0 0 15 14"><path d="M7.500 2.500c-2-1.500-4-1.500-6.500-1v10c2.500-.5 4.500-.5 6.500 1c2-1.500 4-1.500 6.500-1v-10c-2.500-.5-4.500-.5-6.500 1z M7.500 2.500v10" fill="none" stroke="#fff" stroke-width="1.100"/><path d="M3 4.500h2.500 M3 6.500h2.500 M3 8.500h2.500 M9.500 4.500h2.500 M9.500 6.500h2.500 M9.500 8.500h2.500" stroke="#fff" stroke-width=".700"/></svg>
<div class="r" style="left:1023.5px;top:658.5px;width:39.5px;height:21.5px;background:#142f63;"></div>
<svg class="r" style="left:1037px;top:662px" width="12" height="15" viewBox="0 0 12 15"><rect x="1" y="1" width="10" height="13" fill="none" stroke="#fff" stroke-width="1.200"/><path d="M3 4h6 M3 6.500h6 M3 9h6 M3 11.500h6" stroke="#fff" stroke-width=".900"/></svg>
<svg class="r" style="left:1075px;top:662px" width="16" height="15" viewBox="0 0 16 15"><path d="M10.500 4V1h-9.500v12h5" fill="none" stroke="#fff" stroke-width="1.100"/><path d="M3 4h6 M3 6.500h5 M3 9h3" stroke="#fff" stroke-width=".900"/><circle cx="10.500" cy="10" r="4" fill="#fff"/><path d="M6.500 10h8 M10.500 6v8" stroke="#2b579a" stroke-width=".700"/></svg>
<div class="r" style="left:1108.5px;top:669px;width:7px;height:1px;background:#9db4da;"></div>
<div class="r" style="left:1122px;top:669px;width:98px;height:1px;background:#fff;"></div>
<div class="r" style="left:1169px;top:663.5px;width:4.5px;height:12px;background:#fff;"></div>
<div class="r" style="left:1225.5px;top:669px;width:8px;height:1px;background:#c5d2ea;"></div>
<div class="r" style="left:1229px;top:665.5px;width:1px;height:8px;background:#c5d2ea;"></div>
<div class="t" style="left:1247.0px;top:664px;font-size:10.5px;color:#fff;letter-spacing:-0.34px;">100%</div>
<div class="r" style="left:0px;top:680px;width:1280px;height:40px;background:linear-gradient(90deg,#253844 0%,#253a48 27%,#22384a 47%,#1e3040 74%,#1f2b44 94%,#1f2a45 100%);"></div>
<svg class="r" style="left:16px;top:691px" width="17" height="18" viewBox="0 0 17 18"><path d="M0 2.800L7.200 1.800V8.500H0z M8.200 1.600L16.500 .400V8.500H8.200z M0 9.500H7.200V16.200L0 15.200z M8.200 9.500H16.500V17.600L8.200 16.400z" fill="#fff"/></svg>
<div class="r" style="left:48px;top:680px;width:288px;height:40px;background:#f2f2f2;"></div>
<div class="r" style="left:48px;top:719px;width:288px;height:1px;background:#b4b4b4;"></div>
<svg class="r" style="left:58px;top:690px" width="20" height="20" viewBox="0 0 20 20"><circle cx="12" cy="7.500" r="5.200" fill="none" stroke="#222" stroke-width="1.400"/><path d="M8.200 11.500L2 18" stroke="#222" stroke-width="1.500"/></svg>
<div class="t" style="left:88.0px;top:693px;font-size:15px;color:#333;letter-spacing:-0.06px;">Type here to search</div>
<svg class="r" style="left:260px;top:680px" width="76" height="40" viewBox="0 0 76 40"><path d="M0 40l5-14h62l9 14z" fill="#efc9a0"/><path d="M9 17l20-5l7 17l-21 6z" fill="#f4f1f0" stroke="#5fb27a" stroke-width="1.500"/><path d="M14.500 34.500l21-6l.8 2.200l-21 6z" fill="#4da86c"/><path d="M14 20l12-3l3 8l-12 3.500z" fill="#e2dde6"/><path d="M27 21l8-10l4 2.500l-7.500 10z" fill="#f5b030"/><path d="M35 11l2-2.500l4 2.500l-2 2.500z" fill="#e8604c"/><path d="M5 4l1.500 3l3.300.4l-2.400 2.300l.6 3.300l-3-1.600l-3 1.600l.6-3.300l-2.400-2.300l3.300-.4z" fill="#c66ad6"/><path d="M50 9c0-7.500 12-7.500 12 0" fill="none" stroke="#1d5fb8" stroke-width="2.500"/><rect x="45.500" y="6.500" width="22.500" height="28.500" rx="9" fill="#2f80e8"/><rect x="49" y="23" width="15.500" height="9" rx="2.500" fill="#4f9cf4"/><path d="M46 30c3 5 19 5 21.500 0v-3c-3 4-18 4-21.500 0z" fill="#1e62c8"/><circle cx="69.500" cy="10" r="2" fill="#f0b030"/><circle cx="41" cy="23" r="1.500" fill="#6ac0e8"/></svg>
<svg class="r" style="left:351px;top:690px" width="19" height="18" viewBox="0 0 19 18"><path d="M1.500 1.500h12 M1.500 16.500h12" stroke="#e4e4e4" stroke-width="1.100"/><rect x="2" y="4.500" width="11" height="9" fill="none" stroke="#f0f0f0" stroke-width="1.300"/><path d="M16.500 1.500v15" stroke="#e4e4e4" stroke-width="1.200" stroke-dasharray="4.500 1.500 3 1.500"/></svg>
<svg class="r" style="left:396px;top:688px" width="24" height="24" viewBox="0 0 24 24"><circle cx="16.500" cy="5.500" r="3" fill="#7b83eb"/><circle cx="10.500" cy="5" r="3.800" fill="#5b62c9"/><rect x="12" y="9" width="10.500" height="10" rx="3" fill="#7b83eb"/><rect x="5" y="9" width="12" height="13" rx="4" fill="#5058c0"/><rect x="1" y="7" width="10" height="10" rx="1" fill="#4048a8"/><text x="6" y="15" font-family="Liberation Sans,sans-serif" font-size="8" font-weight="bold" fill="#fff" text-anchor="middle">T</text></svg>
<svg class="r" style="left:441px;top:689px" width="24" height="22" viewBox="0 0 24 22"><path d="M1 3.500h8l2 2h12v14h-22z" fill="#e9a91e"/><path d="M1 7h22v13h-22z" fill="#ffd75e"/><path d="M5 13h14v7h-14z" fill="#3f8fd8"/><path d="M8 16.500h8v3.500h-8z" fill="#ffd75e"/></svg>
<div class="r" style="left:435px;top:718px;width:35px;height:2px;background:#8ab6e6;"></div>
<svg class="r" style="left:485px;top:688px" width="26" height="26" viewBox="0 0 26 26"><ellipse cx="11" cy="9" rx="9.500" ry="6.500" fill="#f2f2f2" stroke="#c9c0c8" stroke-width="1"/><ellipse cx="11" cy="11.500" rx="8" ry="4" fill="#b98aa8"/><path d="M6 5l10 14 M15 5l-2 14" stroke="#d04a4a" stroke-width="1.300"/><circle cx="17.500" cy="20" r="2.600" fill="none" stroke="#2a9fd6" stroke-width="1.600"/><circle cx="12" cy="21.500" r="2.600" fill="none" stroke="#2a9fd6" stroke-width="1.600"/></svg>
<svg class="r" style="left:528.5px;top:687.5px" width="24" height="25" viewBox="0 0 24 25"><path d="M7.500 5.500c0-4.500 9-4.500 9 0" fill="none" stroke="#3aa0e0" stroke-width="1.600"/><rect x=".5" y="4" width="23" height="20.500" rx="2.500" fill="#f3f3f5"/><rect x="6" y="8.500" width="5.500" height="5.500" fill="#f25022"/><rect x="12.500" y="8.500" width="5.500" height="5.500" fill="#7fba00"/><rect x="6" y="15" width="5.500" height="5.500" fill="#00a4ef"/><rect x="12.500" y="15" width="5.500" height="5.500" fill="#ffb900"/></svg>
<svg class="r" style="left:572px;top:688px" width="24" height="24" viewBox="0.500 1 22 22"><rect x="7" y="2" width="15" height="19" rx="1.500" fill="#21a366"/><rect x="14" y="2" width="8" height="9.500" fill="#33c481"/><rect x="1" y="6" width="12" height="12" rx="1" fill="#107c41"/><text x="7" y="15.500" font-family="Liberation Sans,sans-serif" font-size="9" font-weight="bold" fill="#fff" text-anchor="middle">X</text></svg>
<svg class="r" style="left:616px;top:688px" width="24" height="24" viewBox="0.500 1 22 22"><rect x="7" y="2" width="15" height="19" rx="1.500" fill="#1a80d8"/><rect x="14" y="2" width="8" height="9.500" fill="#50b0f0"/><rect x="1" y="6" width="12" height="12" rx="1" fill="#0f64b8"/><text x="7" y="15.500" font-family="Liberation Sans,sans-serif" font-size="9" font-weight="bold" fill="#fff" text-anchor="middle">O</text></svg>
<svg class="r" style="left:660.5px;top:688px" width="24" height="24" viewBox="2 2 20 20"><circle cx="12" cy="12" r="10" fill="#db4437"/><path d="M12 12L3.340 17A10 10 0 0 0 14.500 21.680z" fill="#0f9d58"/><path d="M12 12L3.340 7A10 10 0 0 0 3.340 17z" fill="#0f9d58"/><path d="M12 12L20.660 7A10 10 0 0 1 14.500 21.680z" fill="#ffcd40"/><path d="M12 12L20.660 7A10 10 0 0 0 3.340 7z" fill="#db4437"/><circle cx="12" cy="12" r="4.600" fill="#fff"/><circle cx="12" cy="12" r="3.600" fill="#4285f4"/></svg>
<svg class="r" style="left:704px;top:688px" width="24" height="24" viewBox="0 0 24 24"><circle cx="14" cy="12" r="9.500" fill="#ed6c47"/><path d="M14 2.500a9.500 9.500 0 0 1 9.500 9.500h-9.500z" fill="#ff8f6b"/><rect x="1" y="6" width="12" height="12" rx="1" fill="#c43e1c"/><text x="7" y="15.500" font-family="Liberation Sans,sans-serif" font-size="9" font-weight="bold" fill="#fff" text-anchor="middle">P</text></svg>
<svg class="r" style="left:748px;top:688px" width="24" height="24" viewBox="0.500 1 22 22"><rect x="7" y="2" width="15" height="19" rx="1.500" fill="#2b7cd3"/><rect x="14" y="2" width="8" height="9.500" fill="#41a5ee"/><rect x="1" y="6" width="12" height="12" rx="1" fill="#185abd"/><text x="7" y="15.500" font-family="Liberation Sans,sans-serif" font-size="9" font-weight="bold" fill="#fff" text-anchor="middle">W</text></svg>
<div class="r" style="left:743px;top:718px;width:34px;height:2px;background:#8ab6e6;"></div>
<svg class="r" style="left:792px;top:688px" width="24" height="24" viewBox="0.500 1 22 22"><rect x="7" y="2" width="15" height="19" rx="1.500" fill="#1a80d8"/><rect x="14" y="2" width="8" height="9.500" fill="#50b0f0"/><rect x="1" y="6" width="12" height="12" rx="1" fill="#0f64b8"/><text x="7" y="15.500" font-family="Liberation Sans,sans-serif" font-size="9" font-weight="bold" fill="#fff" text-anchor="middle">O</text></svg>
<div class="r" style="left:787px;top:718px;width:34px;height:2px;background:#8ab6e6;"></div>
<svg class="r" style="left:836px;top:688px" width="24" height="24" viewBox="2 2 20 20"><circle cx="12" cy="12" r="10" fill="#db4437"/><path d="M12 12L3.340 17A10 10 0 0 0 14.500 21.680z" fill="#0f9d58"/><path d="M12 12L3.340 7A10 10 0 0 0 3.340 17z" fill="#0f9d58"/><path d="M12 12L20.660 7A10 10 0 0 1 14.500 21.680z" fill="#ffcd40"/><path d="M12 12L20.660 7A10 10 0 0 0 3.340 7z" fill="#db4437"/><circle cx="12" cy="12" r="4.600" fill="#fff"/><circle cx="12" cy="12" r="3.600" fill="#4285f4"/></svg>
<div class="r" style="left:831px;top:718px;width:34px;height:2px;background:#8ab6e6;"></div>
<div class="r" style="left:871px;top:680px;width:42px;height:40px;background:#485864;"></div>
<div class="r" style="left:871px;top:718px;width:42px;height:2px;background:#8ab6e6;"></div>
<svg class="r" style="left:879px;top:688px" width="24" height="24" viewBox="0 0 24 24"><circle cx="12" cy="12" r="10" fill="none" stroke="#9ab0c4" stroke-width="1.200"/><circle cx="12" cy="12" r="4" fill="#8fc4e8"/></svg>
<svg class="r" style="left:921px;top:689px" width="20" height="22" viewBox="0 0 20 22"><path d="M-4.500 4.500c-2.500 4-2.500 9 0 13" fill="none" stroke="#fff" stroke-width="2.200"/><path d="M11 2c4 4 6 10 4.500 17h-5.500c1-6 0-12 1-17z" fill="#f0b428"/><path d="M11 2c1.500 2 2 5 1.500 8l-2 .5z" fill="#3a78c8"/></svg>
<svg class="r" style="left:965px;top:687px" width="30" height="26" viewBox="0 0 30 26"><circle cx="22" cy="5.500" r="3.500" fill="#e8502c"/><path d="M6.500 21a5.500 5.500 0 0 1 .8-10.800a7 7 0 0 1 13 1.500a4.800 4.800 0 0 1 .7 9.300z" fill="#e4e9f0"/><path d="M6.500 21a5.500 5.500 0 0 1-2-2h18c-.5 1-1.500 2-2.500 2z" fill="#c5cedb"/></svg>
<div class="t" style="left:999.5px;top:694px;font-size:14px;color:#fff;letter-spacing:-0.68px;">53°F</div>
<svg class="r" style="left:1041px;top:695px" width="16" height="9" viewBox="0 0 16 9"><path d="M1.500 7.500l6.500-6l6.500 6" fill="none" stroke="#fff" stroke-width="1.300"/></svg>
<svg class="r" style="left:1063px;top:692px" width="22" height="16" viewBox="0 0 22 16"><path d="M5 13a4 4 0 0 1 .5-7.800a5.500 5.500 0 0 1 10.300 1a3.600 3.600 0 0 1 .2 6.800z" fill="#2a8ae0"/><circle cx="15" cy="11" r="3.600" fill="#1e2e40" stroke="#dfe6ee" stroke-width="1.200"/><circle cx="15" cy="11" r="1.300" fill="#dfe6ee"/></svg>
<svg class="r" style="left:1088px;top:693px" width="20" height="14" viewBox="0 0 20 14"><rect x="5" y="4" width="13.500" height="8" fill="none" stroke="#fff" stroke-width="1.200"/><rect x="6.500" y="5.500" width="10.500" height="5" fill="#e8e8e8"/><path d="M3 1v3 M1 1v3 M0 4h4.500v2.500h-4.500z M2.200 6.500v3h2.500" fill="none" stroke="#fff" stroke-width="1"/></svg>
<svg class="r" style="left:1113px;top:691px" width="18" height="18" viewBox="0 0 18 18"><path d="M2 10a12 12 0 0 1 12-8" fill="none" stroke="#aab4bc" stroke-width="1.200"/><path d="M5 12.500a9 9 0 0 1 9.500-7" fill="none" stroke="#fff" stroke-width="1.200"/><path d="M8 14.500a6 6 0 0 1 7-5" fill="none" stroke="#fff" stroke-width="1.200"/><circle cx="14" cy="15" r="1.400" fill="#fff"/></svg>
<svg class="r" style="left:1137px;top:692px" width="18" height="16" viewBox="0 0 18 16"><path d="M1.500 5.500h3l4-3.500v12l-4-3.500h-3z" fill="none" stroke="#fff" stroke-width="1.100"/><path d="M10.500 5.500q1.500 2.500 0 5" fill="none" stroke="#fff" stroke-width="1"/><path d="M12.500 4q2.500 4 0 8" fill="none" stroke="#8a98a4" stroke-width="1"/></svg>
<div class="t" style="left:1170.0px;top:685px;font-size:12px;color:#fff;letter-spacing:-0.17px;">3:49 PM</div>
<div class="t" style="left:1167.5px;top:704px;font-size:12px;color:#fff;letter-spacing:0.29px;">2/7/2023</div>
<svg class="r" style="left:1238px;top:690px" width="24" height="28" viewBox="0 0 24 28"><path d="M1.500 1.500h16v11h-9l-3.500 3.500v-3.500h-3.500z" fill="#fff"/><path d="M4 4.500h11 M4 7h11 M4 9.500h8" stroke="#1f2a45" stroke-width=".900"/><circle cx="15.500" cy="18" r="7.800" fill="#2a3a44" stroke="#8a949c" stroke-width="1"/><text x="15.500" y="22" font-family="Liberation Sans,sans-serif" font-size="10.500" fill="#fff" text-anchor="middle">25</text></svg>
<div class="r" style="left:1274.5px;top:680px;width:1px;height:40px;background:#6a7a84;"></div>
<div class="r" style="left:424.500px;top:592px;width:72px;height:72px;box-sizing:border-box;border:3.500px solid #eff01f;border-radius:50%;"></div>
<svg class="r" style="left:457px;top:626px" width="12" height="18" viewBox="0 0 12 18"><path d="M1 1v13l3-2.800l2.200 5l2-.900l-2.200-4.800h4z" fill="#fff" stroke="#222" stroke-width="1"/></svg>
</div>
</body></html>
